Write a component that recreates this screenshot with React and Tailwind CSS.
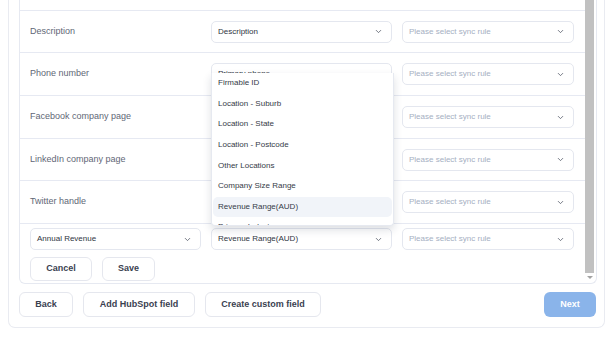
import { ChevronDown } from 'lucide-react';

const rows = [
  { label: 'Description', value: 'Description', h: 'h-[42px]' },
  { label: 'Phone number', value: 'Primary phone', h: 'h-[43px]', open: true },
  { label: 'Facebook company page', value: '', h: 'h-[43px]' },
  { label: 'LinkedIn company page', value: '', h: 'h-[42px]' },
  { label: 'Twitter handle', value: '', h: 'h-[43px]' },
];

const options = [
  'Firmable ID',
  'Location - Suburb',
  'Location - State',
  'Location - Postcode',
  'Other Locations',
  'Company Size Range',
  'Revenue Range(AUD)',
  'Primary Industry',
];

function Select({ value, placeholder, width, children }) {
  return (
    <div className={`relative ${width}`}>
      <div className="h-[22px] border border-[#e4e7ef] rounded-[5px] bg-white flex items-center justify-between pl-[6px] pr-[8px]">
        <span className={`text-[8px] leading-none ${value ? 'text-[#2f3542]' : 'text-[#a5afc2]'}`}>
          {value || placeholder}
        </span>
        <ChevronDown size={9} strokeWidth={2} className="text-[#4b5160]" />
      </div>
      {children}
    </div>
  );
}

function Dropdown() {
  return (
    <div className="absolute top-[10px] left-0 w-[183px] h-[153px] overflow-hidden bg-white border border-t-0 border-[#e6e9f0] rounded-b-[4px] shadow-[0_4px_8px_rgba(30,40,70,0.15)] z-10 px-[1px]">
      {options.map((o) => (
        <div
          key={o}
          className={`h-[20.6px] flex items-center px-[5px] text-[8px] text-[#353b47] rounded-[5px] ${
            o === 'Revenue Range(AUD)' ? 'bg-[#f1f4f9]' : ''
          }`}
        >
          {o}
        </div>
      ))}
    </div>
  );
}

function Btn({ children, className = '' }) {
  return (
    <button className={`h-[24px] border border-[#e5e7ee] rounded-[6px] bg-white text-[9px] font-bold text-[#3a4150] flex items-center justify-center ${className}`}>
      {children}
    </button>
  );
}

export default function App() {
  return (
    <div
      className="w-[612px] h-[337px] bg-white overflow-hidden"
      style={{ fontFamily: '"Liberation Sans", Arial, sans-serif' }}
    >
      <div className="ml-[8px] w-[597px] border border-t-0 border-[#e9ebf1] rounded-b-[7px] pl-[10px] pr-[7px] pb-[10px]">
        {/* Mapping table */}
        <div className="w-[578px] h-[284px] border border-t-0 border-[#e6e9f1] rounded-b-[6px] flex overflow-hidden">
          <div className="w-[565px] flex flex-col">
            <div className="h-[11px] border-b border-[#e6e9f2]" />
            {rows.map((r) => (
              <div key={r.label} className={`${r.h} border-b border-[#e6e9f2] flex items-center gap-[10px] px-[10px]`}>
                <div className="w-[171px] text-[9px] text-[#5f6776]">{r.label}</div>
                {!r.value ? (
                  <div className="w-[181px]" />
                ) : (
                  <Select value={r.value} width="w-[181px]">
                    {r.open && <Dropdown />}
                  </Select>
                )}
                <Select placeholder="Please select sync rule" width="w-[172px]" />
              </div>
            ))}
            {/* New field row */}
            <div className="flex flex-col gap-[7px] px-[10px] pt-[4px]">
              <div className="flex items-center gap-[10px]">
                <Select value="Annual Revenue" width="w-[171px]" />
                <Select value="Revenue Range(AUD)" width="w-[181px]" />
                <Select placeholder="Please select sync rule" width="w-[172px]" />
              </div>
              <div className="flex gap-[10px]">
                <Btn className="w-[62px]">Cancel</Btn>
                <Btn className="w-[53px]">Save</Btn>
              </div>
            </div>
          </div>
          {/* Scrollbar */}
          <div className="w-[11px] flex flex-col items-start">
            <div className="w-[9px] h-[273px] bg-[#c1c1c1]" />
            <div className="w-[9px] flex justify-center pt-[3px]">
              <div className="w-0 h-0 border-l-[3px] border-r-[3px] border-t-[3px] border-l-transparent border-r-transparent border-t-[#a3a3a3]" />
            </div>
          </div>
        </div>

        {/* Footer buttons */}
        <div className="flex items-center mt-[8px] gap-[10px]">
          <Btn className="w-[54px] h-[25px]">Back</Btn>
          <Btn className="w-[112px] h-[25px]">Add HubSpot field</Btn>
          <Btn className="w-[116px] h-[25px]">Create custom field</Btn>
          <button className="ml-auto mr-[1px] w-[52px] h-[25px] rounded-[6px] bg-[#8ab4ea] text-white text-[9px] font-bold">
            Next
          </button>
        </div>
      </div>
    </div>
  );
}
